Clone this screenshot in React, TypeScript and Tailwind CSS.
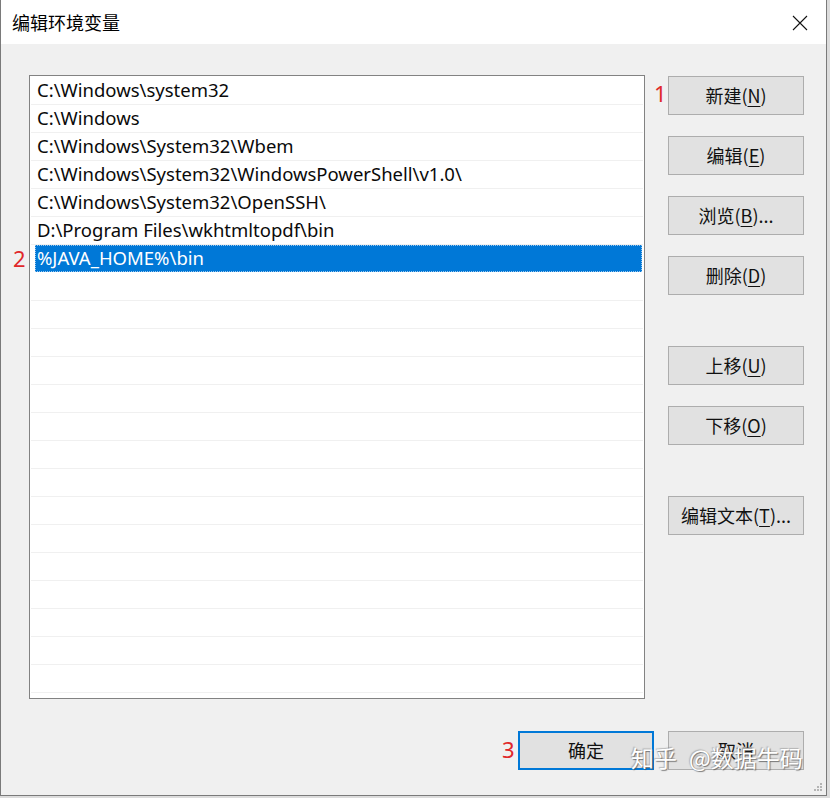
import React from "react";

const FONT = '"Noto Sans", "Noto Sans CJK SC", sans-serif';
const CJK = '"Noto Sans CJK SC", "Noto Sans", sans-serif';

const rows = [
  "C:\\Windows\\system32",
  "C:\\Windows",
  "C:\\Windows\\System32\\Wbem",
  "C:\\Windows\\System32\\WindowsPowerShell\\v1.0\\",
  "C:\\Windows\\System32\\OpenSSH\\",
  "D:\\Program Files\\wkhtmltopdf\\bin",
];

function Btn({ label, k, suffix = "", focused = false }: { label: string; k?: string; suffix?: string; focused?: boolean }) {
  return (
    <div
      className={
        "w-[136px] h-[39px] flex items-center justify-center bg-[#e1e1e1] text-[18px] text-[#111] " +
        (focused ? "border-2 border-[#0078d7]" : "border border-[#adadad]")
      }
      style={{ fontFamily: CJK }}
    >
      {k ? (
        <span>
          {label}(<span className="underline underline-offset-[3px]">{k}</span>){suffix}
        </span>
      ) : (
        <span>{label}</span>
      )}
    </div>
  );
}

export default function App() {
  const empty = Array.from({ length: 16 });
  return (
    <div className="relative w-[830px] h-[798px] bg-[#dcdcdc] overflow-hidden" style={{ fontFamily: FONT }}>
      <div className="w-[827px] h-[796px] flex flex-col border-l border-r border-b border-[#7a7a7a] bg-[#f0f0f0]">
        {/* Title bar */}
        <div className="h-[44px] bg-white flex items-center justify-between pl-[11px] pr-[18px] shrink-0">
          <span className="text-[18px] text-black" style={{ fontFamily: CJK }}>编辑环境变量</span>
          <svg width="16" height="16" viewBox="0 0 16 16" className="mt-[1px]">
            <path d="M1 1 L15 15 M15 1 L1 15" stroke="#111" strokeWidth="1.1" fill="none" />
          </svg>
        </div>
        {/* Body */}
        <div className="flex pl-[28px] pt-[31px]">
          {/* List */}
          <div className="w-[616px] h-[624px] bg-white border border-[#828282] p-[1px] overflow-hidden">
            {rows.map((r) => (
              <div key={r} className="h-[28px] border-b border-[#f0f0f0] flex items-center pl-[6px] text-[18.5px] text-[#0a0a0a] leading-none">
                <span className="-mt-[1px]">{r}</span>
              </div>
            ))}
            <div className="h-[28px] pl-[4px] pr-[1px]">
              <div className="h-[27px] bg-[#0078d7] border border-dotted border-[#9cc8ee] flex items-center pl-[1px] text-[18.5px] text-white leading-none">
                <span className="-mt-[1px]">%JAVA_HOME%\bin</span>
              </div>
            </div>
            {empty.map((_, i) => (
              <div key={i} className="h-[28px] border-b border-[#f0f0f0]" />
            ))}
          </div>
          {/* Buttons */}
          <div className="ml-[23px] pt-[1px] flex flex-col">
            <div className="flex flex-col gap-[21px]">
              <Btn label="新建" k="N" />
              <Btn label="编辑" k="E" />
              <Btn label="浏览" k="B" suffix="..." />
              <Btn label="删除" k="D" />
            </div>
            <div className="flex flex-col gap-[21px] mt-[51px]">
              <Btn label="上移" k="U" />
              <Btn label="下移" k="O" />
            </div>
            <div className="mt-[51px]">
              <Btn label="编辑文本" k="T" suffix="..." />
            </div>
          </div>
        </div>
        {/* Footer */}
        <div className="flex justify-end gap-[14px] pr-[22px] mt-[32px]">
          <Btn label="确定" focused />
          <Btn label="取消" />
        </div>
      </div>

      {/* Annotations */}
      <span className="absolute left-[654px] top-[82px] text-[22px] text-[#e0282a] leading-none">1</span>
      <span className="absolute left-[13px] top-[247px] text-[22px] text-[#e0282a] leading-none">2</span>
      <span className="absolute left-[502px] top-[738px] text-[22px] text-[#e0282a] leading-none">3</span>

      {/* Watermark */}
      <div
        className="absolute left-[631px] top-[746px] text-[23px] leading-none text-white flex items-center"
        style={{ fontFamily: CJK, textShadow: "1px 1px 1px rgba(80,80,80,0.75), -1px -1px 1px rgba(120,120,120,0.45)" }}
      >
        <span>知乎</span>
        <span className="ml-[12px]">@数据牛码</span>
      </div>

      {/* Resize grip */}
      <svg className="absolute left-[813px] top-[782px]" width="10" height="10" viewBox="0 0 10 10">
        <rect x="7" y="1" width="2" height="2" fill="#b5b5b5" />
        <rect x="4" y="4" width="2" height="2" fill="#b5b5b5" />
        <rect x="7" y="4" width="2" height="2" fill="#b5b5b5" />
        <rect x="1" y="7" width="2" height="2" fill="#b5b5b5" />
        <rect x="4" y="7" width="2" height="2" fill="#b5b5b5" />
        <rect x="7" y="7" width="2" height="2" fill="#b5b5b5" />
      </svg>
    </div>
  );
}
